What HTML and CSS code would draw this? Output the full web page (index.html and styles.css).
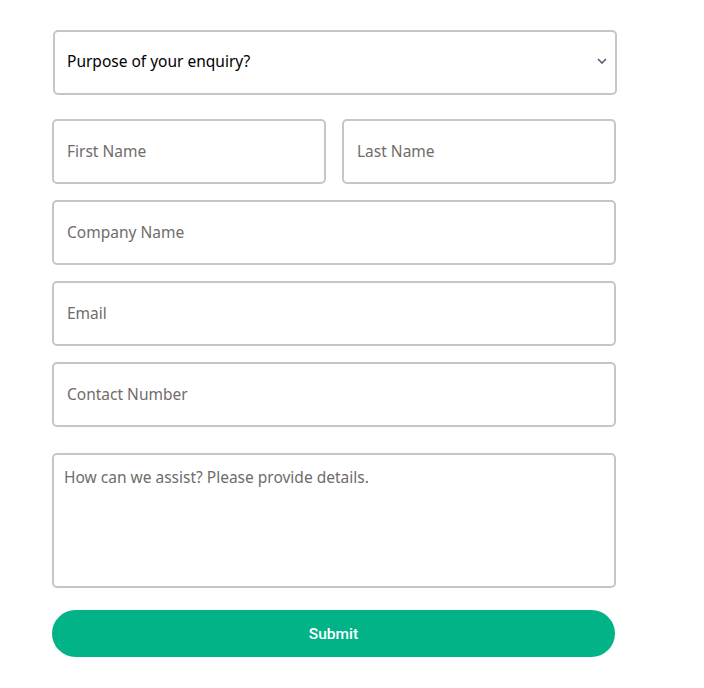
FILE: index.html
```html
<!DOCTYPE html>
<html lang="en">
<head>
    <meta charset="UTF-8">
    <meta name="viewport" content="width=device-width, initial-scale=1.0">
    <title>Contact Us</title>
    <link rel="stylesheet" href="styles.css">
</head>
<body>
    <form class="enquiry-form">
        <div class="select-wrap">
            <select class="field select-field">
                <option>Purpose of your enquiry?</option>
                <option>Sales</option>
                <option>Support</option>
            </select>
            <svg class="chevron" width="10" height="6" viewBox="0 0 10 6">
                <path d="M1 1l4 4 4-4" fill="none" stroke="#55606e" stroke-width="1.6"/>
            </svg>
        </div>

        <div class="name-row">
            <input class="field" type="text" placeholder="First Name">
            <input class="field" type="text" placeholder="Last Name">
        </div>

        <input class="field" type="text" placeholder="Company Name">
        <input class="field" type="email" placeholder="Email">
        <input class="field" type="tel" placeholder="Contact Number">

        <textarea class="field message" placeholder="How can we assist? Please provide details."></textarea>

        <button type="submit" class="submit-btn">Submit</button>
    </form>
</body>
</html>
```

FILE: styles.css
```css
body {
    margin: 0;
    padding: 30px 0 0 52px;
    background: #fff;
    font-family: "Noto Sans", Arial, sans-serif;
}

.enquiry-form {
    width: 564px;
    display: flex;
    flex-direction: column;
}

.field {
    box-sizing: border-box;
    width: 100%;
    height: 65px;
    margin: 0 0 16px;
    padding: 0 13px 2px;
    border: 2px solid #c6c6c6;
    border-radius: 5px;
    background: #fff;
    font-family: inherit;
    font-size: 15.5px;
    color: #222;
    outline: none;
}

.field::placeholder {
    color: #6f6c6a;
}

.select-wrap {
    position: relative;
    padding-left: 1px;
    margin: 0 -1px 24px 0;
}

.select-field {
    -webkit-appearance: none;
    appearance: none;
    display: block;
    margin: 0;
    padding: 0 12px 3px;
    color: #000;
}

.chevron {
    position: absolute;
    right: 10px;
    top: 28px;
}

.name-row {
    display: flex;
    gap: 16px;
}

.message {
    height: 135px;
    margin-top: 10px;
    margin-bottom: 22px;
    padding: 11px 10px;
    resize: none;
}

.submit-btn {
    height: 47px;
    margin-right: 1px;
    border: none;
    border-radius: 24px;
    background: #02b388;
    color: #fff;
    font-family: Roboto, "Noto Sans", sans-serif;
    font-size: 15.5px;
    font-weight: 500;
    cursor: pointer;
}
```
